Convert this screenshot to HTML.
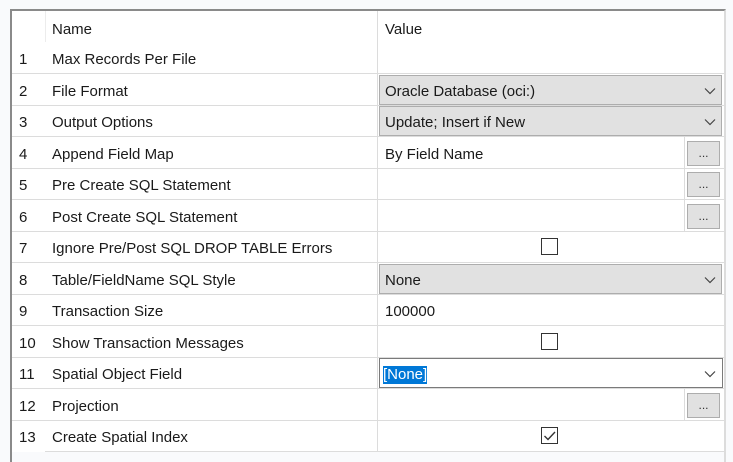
<!DOCTYPE html>
<html><head><style>
body{margin:0;width:733px;height:462px;background:#f9fafc;font-family:"Liberation Sans",sans-serif;font-size:15px;color:#1a1a1a;position:relative;overflow:hidden}
.grid{position:absolute;left:10px;top:9px;width:712px;height:441px;border-left:2px solid #8a8a8a;border-top:2px solid #8a8a8a;border-right:2px solid #dcdcdc;background:#fff}
.lgrid{position:absolute;left:10px;top:450px;width:2px;height:12px;background:#8a8a8a}
.rgrid{position:absolute;left:724px;top:450px;width:2px;height:12px;background:#dcdcdc}
.a{position:absolute}
.hl{position:absolute;height:1px;background:#dcdcdc}
.t{position:absolute;white-space:nowrap;line-height:18px}
.dd{position:absolute;left:379px;width:343px;background:#e1e1e1;border:1px solid #adadad;box-sizing:border-box}
.btn{position:absolute;left:687px;width:33px;height:25px;background:#e1e1e1;border:1px solid #adadad;box-sizing:border-box;text-align:center;font-size:12px;line-height:22px;color:#333}
.cb{position:absolute;left:541px;width:17px;height:17px;border:1.5px solid #333;box-sizing:border-box;background:#fff}
</style></head><body>
<div class="grid"></div>
<div class="lgrid"></div><div class="rgrid"></div>
<div class="a" style="left:45px;top:11px;width:1px;height:31px;background:#ececec"></div>
<div class="a" style="left:377px;top:11px;width:1px;height:441px;background:#dcdcdc"></div>
<div class="t" style="left:52px;top:21px">Name</div>
<div class="t" style="left:385px;top:21px">Value</div>
<div id="rows"></div>
<script>
(function(){
var names=["Max Records Per File","File Format","Output Options","Append Field Map","Pre Create SQL Statement","Post Create SQL Statement","Ignore Pre/Post SQL DROP TABLE Errors","Table/FieldName SQL Style","Transaction Size","Show Transaction Messages","Spatial Object Field","Projection","Create Spatial Index"];
var h="";
for(var i=0;i<13;i++){
 var rt=42+i*31.5;
 var y=Math.round(rt);
 var lineL=(i==12)?45:12;
 h+='<div class="hl" style="left:'+lineL+'px;width:'+(724-lineL)+'px;top:'+Math.round(rt+31)+'px"></div>';
 h+='<div class="t" style="left:19px;top:'+(y+9)+'px">'+(i+1)+'</div>';
 h+='<div class="t" style="left:52px;top:'+(y+9)+'px">'+names[i]+'</div>';
 if(i==1||i==2||i==7){
  var v=i==1?"Oracle Database (oci:)":i==2?"Update; Insert if New":"None";
  h+='<div class="dd" style="top:'+(y+1)+'px;height:30px"></div><div class="t" style="left:385px;top:'+(y+9)+'px">'+v+'</div>';
  h+='<svg class="a" style="left:704px;top:'+(y+13)+'px" width="12" height="8"><path d="M1 1.5 L6 6.5 L11 1.5" stroke="#444" stroke-width="1.2" fill="none"/></svg>';
 }
 if(i==10){
  h+='<div class="a" style="left:379px;top:'+(y+1)+'px;width:344px;height:30px;border:1px solid #7a7a7a;box-sizing:border-box;background:#fff"></div>';
  h+='<div class="t" style="left:383px;top:'+(y+9)+'px;background:#0078d7;color:#fff">[None]</div>';
  h+='<svg class="a" style="left:704px;top:'+(y+13)+'px" width="12" height="8"><path d="M1 1.5 L6 6.5 L11 1.5" stroke="#444" stroke-width="1.2" fill="none"/></svg>';
 }
 if(i==3)h+='<div class="t" style="left:385px;top:'+(y+9)+'px">By Field Name</div>';
 if(i==8)h+='<div class="t" style="left:385px;top:'+(y+9)+'px">100000</div>';
 if(i==3||i==4||i==5||i==11){
  h+='<div class="a" style="left:684px;top:'+y+'px;width:1px;height:31px;background:#dcdcdc"></div>';
  h+='<div class="btn" style="top:'+(y+4)+'px">...</div>';
 }
 if(i==6||i==9||i==12){
  h+='<div class="cb" style="top:'+(y+7)+'px"></div>';
  if(i==12)h+='<svg class="a" style="left:543px;top:'+(y+10)+'px" width="14" height="12"><path d="M1.5 6 L5 9.5 L12 2" stroke="#333" stroke-width="1.4" fill="none"/></svg>';
 }
}
document.getElementById("rows").innerHTML=h;
})();
</script>
</body></html>
